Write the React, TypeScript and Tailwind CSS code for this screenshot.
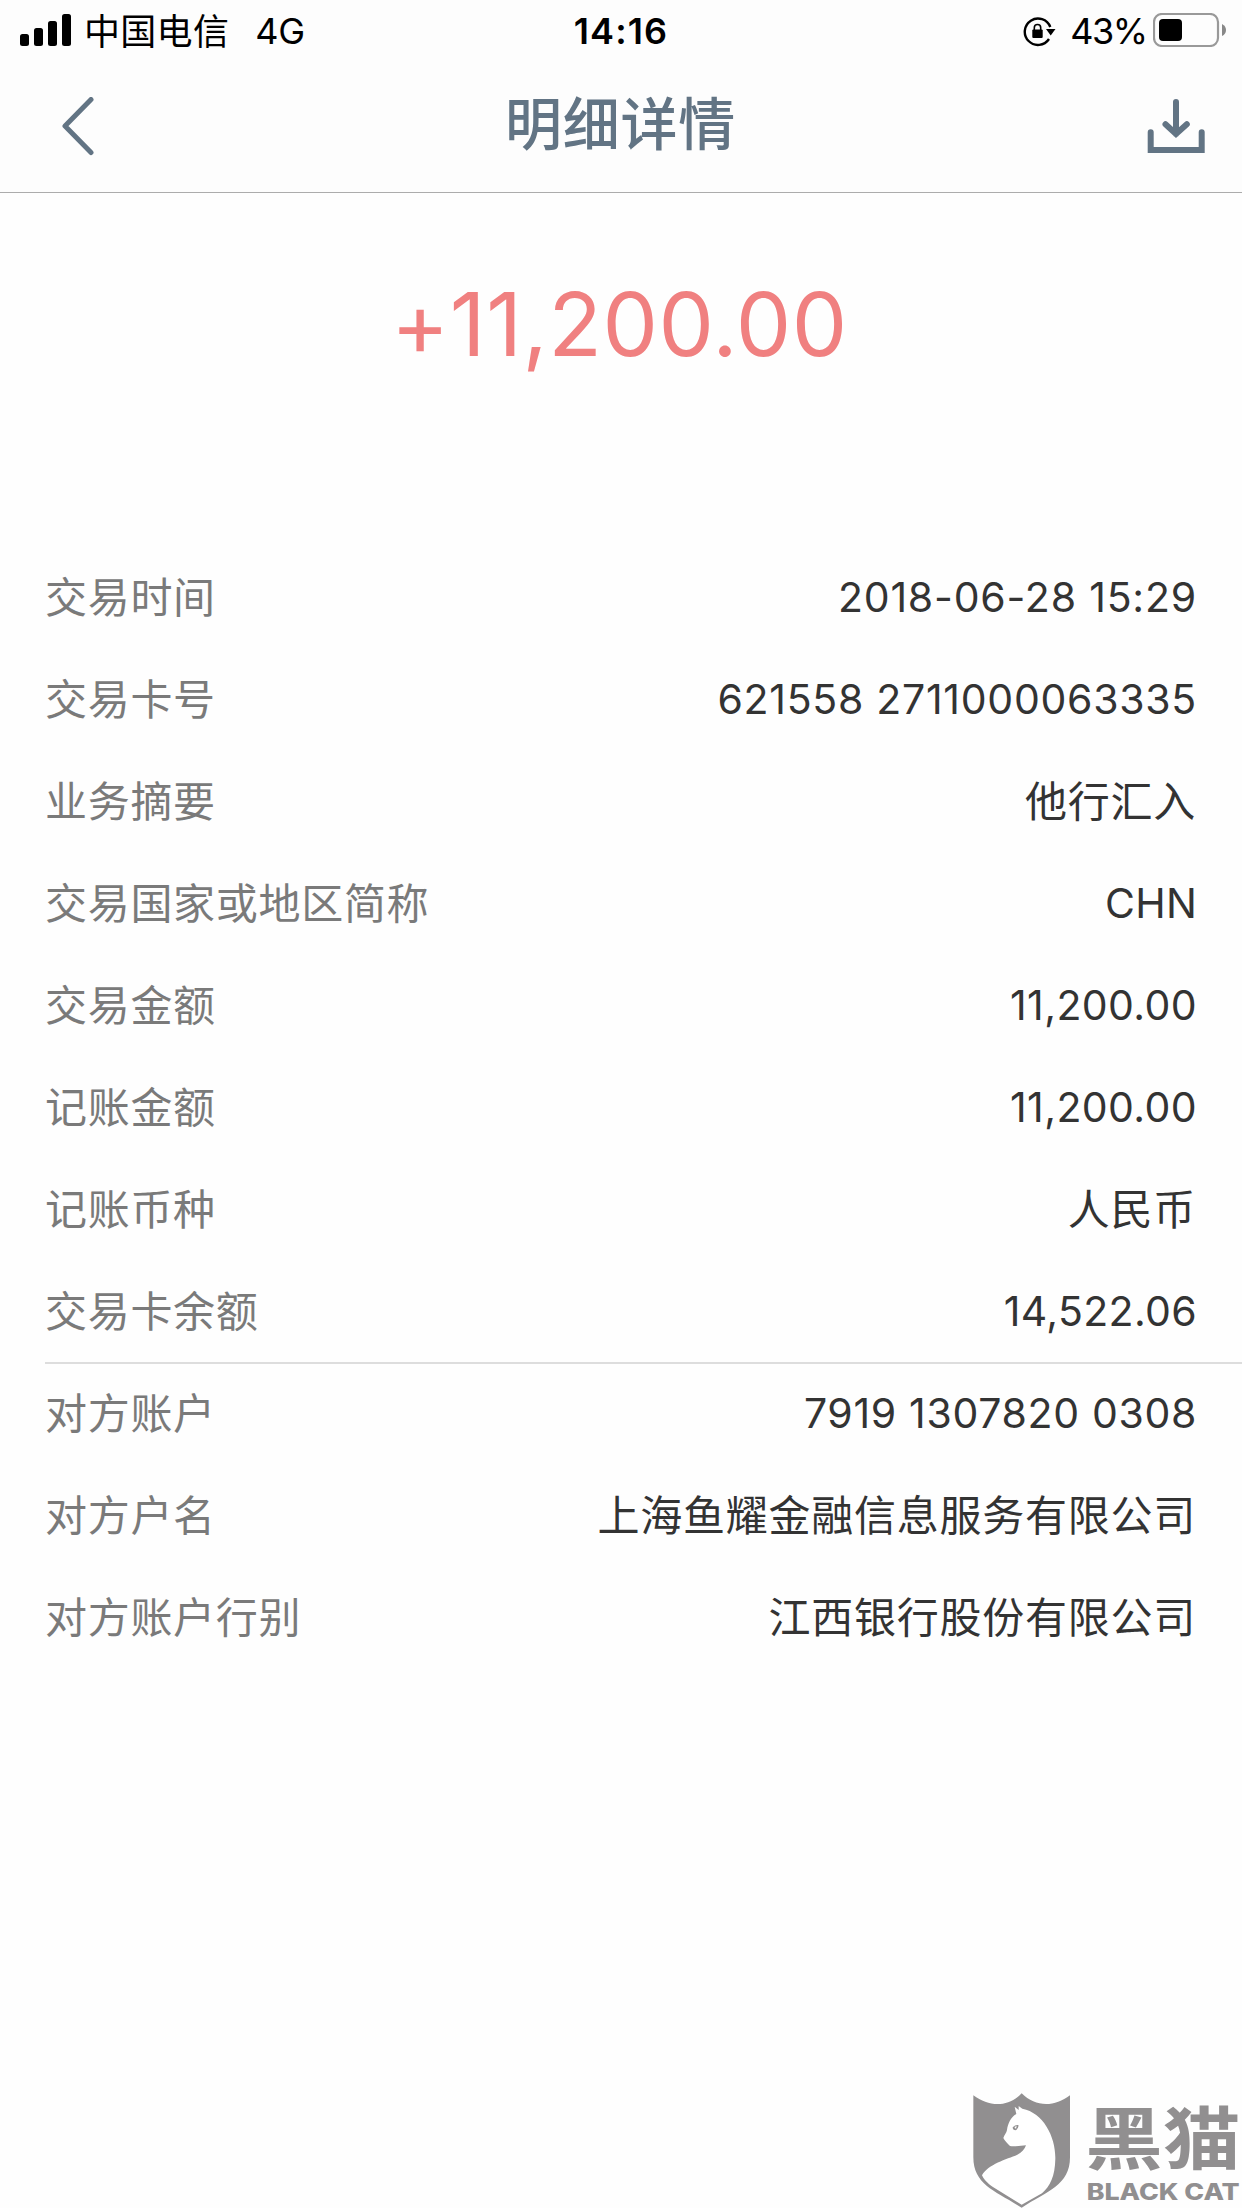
import { ReactNode } from "react";

type Row = { label: string; value: string; style: string };

const CJK = "mr-px pt-[2px] text-[42px] tracking-[0.75px]";

const transaction: Row[] = [
  { label: "交易时间", value: "2018-06-28 15:29", style: "text-[41px] tracking-[0.8px]" },
  { label: "交易卡号", value: "621558 2711000063335", style: "text-[41px] tracking-[0.72px]" },
  { label: "业务摘要", value: "他行汇入", style: CJK },
  { label: "交易国家或地区简称", value: "CHN", style: "text-[41px] tracking-[0.2px]" },
  { label: "交易金额", value: "11,200.00", style: "text-[41px] tracking-[0.4px]" },
  { label: "记账金额", value: "11,200.00", style: "text-[41px] tracking-[0.4px]" },
  { label: "记账币种", value: "人民币", style: CJK },
  { label: "交易卡余额", value: "14,522.06", style: "text-[41px] tracking-[0.35px]" },
];

const counterparty: Row[] = [
  { label: "对方账户", value: "7919 1307820 0308", style: "text-[41px] tracking-[0.67px]" },
  { label: "对方户名", value: "上海鱼耀金融信息服务有限公司", style: CJK },
  { label: "对方账户行别", value: "江西银行股份有限公司", style: CJK },
];

function DetailRow({ label, value, style }: Row) {
  return (
    <div className="flex h-[102px] items-center justify-between pb-[2px] pr-[45px]">
      <span className="pt-[2px] text-[42px] tracking-[0.7px] text-[#7a7a7a]">{label}</span>
      <span className={`${style} text-[#333333]`}>{value}</span>
    </div>
  );
}

function Section({ children }: { children: ReactNode }) {
  return <section className="ml-[45px]">{children}</section>;
}

function StatusBar() {
  return (
    <div className="flex h-[62px] items-center justify-between pl-5 pr-4 text-[36px] text-black">
      <div className="flex w-[400px] items-center">
        <svg className="mb-[2px]" width="51" height="32" viewBox="0 0 51 32">
          <rect x="0" y="20" width="9" height="12" rx="2.5" />
          <rect x="14" y="14" width="9" height="18" rx="2.5" />
          <rect x="28" y="7" width="9" height="25" rx="2.5" />
          <rect x="42" y="0" width="9" height="32" rx="2.5" />
        </svg>
        <span className="ml-[13px] pt-[2px] tracking-[0.3px]">中国电信</span>
        <span className="ml-[26px] tracking-[-0.3px]">4G</span>
      </div>
      <span className="font-semibold tracking-[1.1px]">14:16</span>
      <div className="flex w-[404px] items-center justify-end">
        <svg className="mt-px" width="33" height="30" viewBox="0 0 33 30">
          <path d="M27.3 10A13.2 13.2 0 1 0 26 22" fill="none" stroke="#000" strokeWidth="2.4" />
          <path d="M23 12h9.5l-4.8 6.5z" />
          <rect x="9.3" y="12.5" width="10.4" height="8.5" rx="1" />
          <path d="M11.3 13v-2.3a3.2 3.2 0 0 1 6.4 0V13" fill="none" stroke="#000" strokeWidth="1.6" />
        </svg>
        <span className="ml-[14px] tracking-[-1.5px]">43%</span>
        <svg className="mb-[2px] ml-[6.5px]" width="73" height="34" viewBox="0 0 73 34">
          <rect x="1" y="1" width="64" height="32" rx="8" fill="none" stroke="#999" strokeWidth="2.2" />
          <rect x="6" y="6" width="23" height="22" rx="4" />
          <path d="M69 11q4 2 4 6t-4 6z" fill="#888" />
        </svg>
      </div>
    </div>
  );
}

function NavBar() {
  return (
    <header className="flex h-[130px] items-center justify-between pl-[60px] pr-[35px] text-[#627484]">
      <svg width="36" height="60" viewBox="0 0 36 60" fill="none" stroke="currentColor" strokeWidth="5" strokeLinecap="round" strokeLinejoin="round">
        <path d="M31 2.5L5 29L31 55.5" />
      </svg>
      <h1 className="mb-[6px] mr-[2px] text-[57px] font-medium tracking-[0.7px]">明细详情</h1>
      <svg width="60" height="56" viewBox="0 0 60 56" fill="none" stroke="currentColor" strokeWidth="6" strokeLinecap="round">
        <path d="M3.7 33.3V51H54.7V33.3M29 3V35M18.5 25.3L29 35L39.8 25.3" />
      </svg>
    </header>
  );
}

function BlackCatLogo() {
  return (
    <svg className="absolute bottom-0 right-0 h-[128px] w-[282px]" viewBox="0 0 846 384" fill="#918f90">
      <path d="M40 46C88 82 145 82 185 40C226 82 283 82 330 46V232C330 315 262 334 185 383C108 334 40 315 40 232Z" />
      <path
        d="M176 78L187 86C250 98 287 170 286 236C285 290 270 318 246 340L185 374L100 322C82 310 70 296 66 286C84 252 140 238 172 224C186 217 194 208 198 196C180 198 160 200 150 198C142 190 134 182 130 174C132 166 140 158 141 150C144 130 152 112 169 102L164 80L176 90Z"
        fill="#fff"
      />
      <path d="M158 142q8-8 17-7q2 10-8 16q-9 0-9-9z" />
      <path d="M163 141l7-3l-2 9z" fill="#fff" />
      <text x="376" y="252" fontSize="206" fontWeight="700" fontFamily="'Noto Sans CJK SC', sans-serif" textLength="466" lengthAdjust="spacingAndGlyphs">黑猫</text>
      <text x="380" y="360" fontSize="67" fontWeight="800" fontFamily="Inter, sans-serif" textLength="459" lengthAdjust="spacingAndGlyphs">BLACK CAT</text>
    </svg>
  );
}

export default function App() {
  return (
    <main className="relative h-[2208px] w-[1242px] overflow-hidden bg-[#fefefe] font-['Inter','Noto_Sans_CJK_SC',sans-serif] leading-none">
      <div className="border-b border-[#acacac] bg-[#fdfdfd]">
        <StatusBar />
        <NavBar />
      </div>
      <div className="flex h-[354px] justify-center pr-[3px] pt-[87px] text-[88px] tracking-[0.5px] text-[#f08080]">
        <span className="h-[88px] [font-feature-settings:'calt'_0]">+11,200.00</span>
      </div>
      <Section>
        {transaction.map((r) => <DetailRow key={r.label} {...r} />)}
      </Section>
      <div className="-my-px ml-[45px] h-[2px] bg-[#dddddd]" />
      <Section>
        {counterparty.map((r) => <DetailRow key={r.label} {...r} />)}
      </Section>
      <BlackCatLogo />
    </main>
  );
}
